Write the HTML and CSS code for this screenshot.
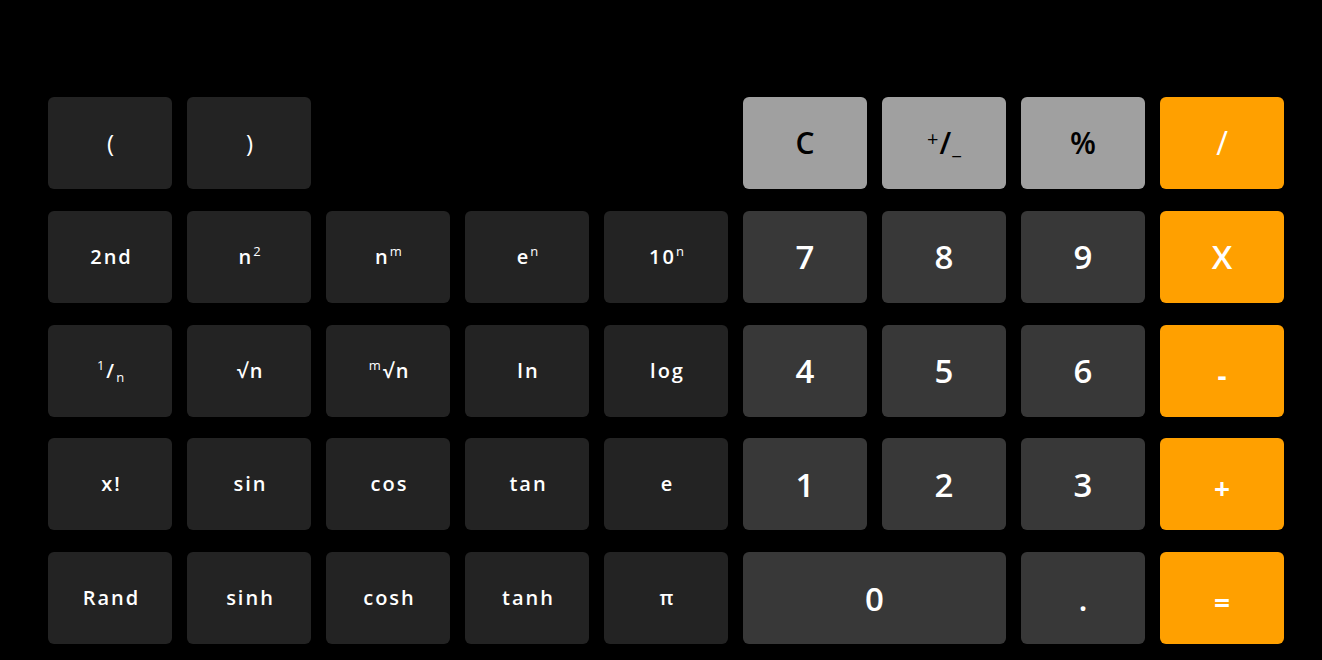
FILE: index.html
```html
<!DOCTYPE html>
<html lang="en">
<head>
<meta charset="utf-8">
<title>Calculator</title>
<link rel="stylesheet" href="styles.css">
</head>
<body>
<main class="calc">
  <div class="keys">
    <button class="key fn paren"><span>(</span></button>
    <button class="key fn paren"><span>)</span></button>
    <span class="blank"></span>
    <span class="blank"></span>
    <span class="blank"></span>
    <button class="key util"><span>C</span></button>
    <button class="key util"><span><sup class="hi">+</sup>/<sub class="lo">_</sub></span></button>
    <button class="key util"><span>%</span></button>
    <button class="key op slash"><span>/</span></button>

    <button class="key fn"><span>2nd</span></button>
    <button class="key fn"><span>n<sup>2</sup></span></button>
    <button class="key fn"><span>n<sup>m</sup></span></button>
    <button class="key fn"><span>e<sup>n</sup></span></button>
    <button class="key fn"><span>10<sup>n</sup></span></button>
    <button class="key num"><span>7</span></button>
    <button class="key num"><span>8</span></button>
    <button class="key num"><span>9</span></button>
    <button class="key op"><span>X</span></button>

    <button class="key fn"><span><sup>1</sup>/<sub>n</sub></span></button>
    <button class="key fn"><span>√n</span></button>
    <button class="key fn"><span><sup>m</sup>√n</span></button>
    <button class="key fn"><span>ln</span></button>
    <button class="key fn"><span>log</span></button>
    <button class="key num"><span>4</span></button>
    <button class="key num"><span>5</span></button>
    <button class="key num"><span>6</span></button>
    <button class="key op small"><span>-</span></button>

    <button class="key fn"><span>x!</span></button>
    <button class="key fn"><span>sin</span></button>
    <button class="key fn"><span>cos</span></button>
    <button class="key fn"><span>tan</span></button>
    <button class="key fn"><span>e</span></button>
    <button class="key num"><span>1</span></button>
    <button class="key num"><span>2</span></button>
    <button class="key num"><span>3</span></button>
    <button class="key op small"><span>+</span></button>

    <button class="key fn"><span>Rand</span></button>
    <button class="key fn"><span>sinh</span></button>
    <button class="key fn"><span>cosh</span></button>
    <button class="key fn"><span>tanh</span></button>
    <button class="key fn"><span>π</span></button>
    <button class="key num wide"><span>0</span></button>
    <button class="key num"><span>.</span></button>
    <button class="key op small"><span>=</span></button>
  </div>
</main>
</body>
</html>
```

FILE: styles.css
```css
html, body {
  margin: 0;
  padding: 0;
  background: #000;
}

.calc {
  padding: 97px 0 0 48px;
}

.keys {
  display: grid;
  grid-template-columns: repeat(9, 124px);
  grid-template-rows: repeat(5, 92px);
  column-gap: 15px;
  row-gap: 21.75px;
}

.key {
  border: none;
  border-radius: 6px;
  padding: 0;
  margin: 0;
  display: flex;
  align-items: center;
  justify-content: center;
  font-family: "Open Sans", "Noto Sans", sans-serif;
  color: #fff;
  line-height: 1;
}

.key > span {
  display: block;
  white-space: nowrap;
}

.fn {
  background: #232323;
  font-size: 20px;
  font-weight: 600;
  letter-spacing: 2px;
  padding-left: 3px;
}

.fn.paren {
  font-size: 24px;
  font-weight: 400;
}

.num {
  background: #383838;
  font-size: 33px;
  font-weight: 600;
}

.util {
  background: #a0a0a0;
  color: #000;
  font-size: 30px;
  font-weight: 600;
}

.op {
  background: #ffa000;
  font-size: 33px;
  font-weight: 600;
}

.op.slash {
  font-size: 32px;
  font-weight: 400;
}

.op.small {
  font-size: 28px;
  font-weight: 700;
  padding-top: 8px;
}

.wide {
  grid-column: span 2;
}

/* exponents and subscripts inside the function labels */
.key sup,
.key sub {
  font-size: 13px;
  font-weight: 500;
  line-height: 0;
  position: relative;
  vertical-align: baseline;
}

.key sup {
  top: -8px;
}

.key sub {
  top: 4px;
}

.util sup.hi {
  font-size: 20px;
  top: -8px;
  margin-right: 1px;
}

.util sub.lo {
  font-size: 20px;
  top: 0;
  margin-left: 1px;
}
```
